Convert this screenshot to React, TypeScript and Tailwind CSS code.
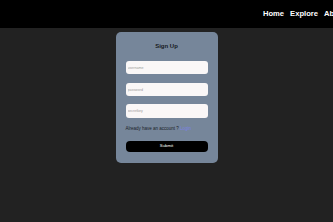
import React from "react";

export default function App() {
  return (
    <div className="w-[333px] h-[222px] overflow-hidden bg-[#222222] font-['Liberation_Sans',Arial,sans-serif]">
      <header className="h-[28px] bg-black flex items-center pl-[263px] gap-[6px] whitespace-nowrap overflow-hidden">
        <span className="text-white font-bold text-[7.6px] leading-none">Home</span>
        <span className="text-white font-bold text-[7.6px] leading-none">Explore</span>
        <span className="text-white font-bold text-[7.6px] leading-none">About</span>
      </header>
      <div className="flex justify-center pt-[4px]">
        <div className="w-[102px] h-[131px] bg-[#76869a] rounded-[5px] px-[10px] pt-[11px] flex flex-col">
          <div className="text-center text-[6px] font-bold text-[#161a22] leading-none">Sign Up</div>
          <input
            className="mt-[12px] h-[13px] w-full rounded-[3px] bg-[#faf7f7] px-[2px] text-[3.6px] outline-none placeholder:text-[#9a9a9a]"
            placeholder="username"
          />
          <input
            className="mt-[9px] h-[13px] w-full rounded-[3px] bg-[#faf7f7] px-[2px] text-[3.6px] outline-none placeholder:text-[#9a9a9a]"
            placeholder="password"
          />
          <input
            className="mt-[8px] h-[14px] w-full rounded-[3px] bg-[#faf7f7] px-[2px] text-[3.6px] outline-none placeholder:text-[#9a9a9a]"
            placeholder="secretkey"
          />
          <div className="mt-[9px] text-[4.5px] leading-none text-[#1b1f2a] whitespace-nowrap">
            Already have an account ? <span className="text-[#7b82e0]">Login</span>
          </div>
          <button className="mt-[9px] h-[11px] w-full rounded-[4px] bg-black text-white text-[4.3px] leading-none">
            Submit
          </button>
        </div>
      </div>
    </div>
  );
}
